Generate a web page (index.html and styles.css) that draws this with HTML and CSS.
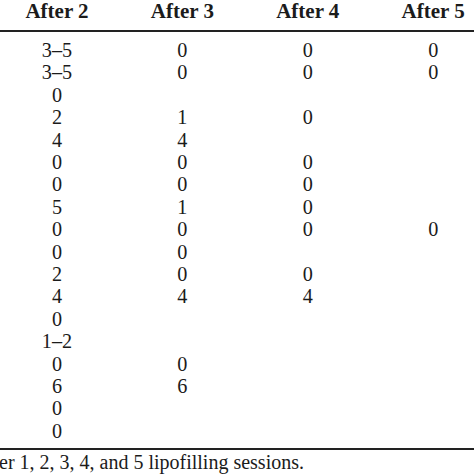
FILE: index.html
```html
<!DOCTYPE html>
<html>
<head>
<meta charset="utf-8">
<link rel="stylesheet" href="styles.css">
</head>
<body>
<div class="page">
  <div class="grid head">
    <div>After 2</div><div>After 3</div><div>After 4</div><div>After 5</div>
  </div>
  <div class="grid body">
    <div>3–5</div><div>0</div><div>0</div><div>0</div>
    <div>3–5</div><div>0</div><div>0</div><div>0</div>
    <div>0</div><div></div><div></div><div></div>
    <div>2</div><div>1</div><div>0</div><div></div>
    <div>4</div><div>4</div><div></div><div></div>
    <div>0</div><div>0</div><div>0</div><div></div>
    <div>0</div><div>0</div><div>0</div><div></div>
    <div>5</div><div>1</div><div>0</div><div></div>
    <div>0</div><div>0</div><div>0</div><div>0</div>
    <div>0</div><div>0</div><div></div><div></div>
    <div>2</div><div>0</div><div>0</div><div></div>
    <div>4</div><div>4</div><div>4</div><div></div>
    <div>0</div><div></div><div></div><div></div>
    <div>1–2</div><div></div><div></div><div></div>
    <div>0</div><div>0</div><div></div><div></div>
    <div>6</div><div>6</div><div></div><div></div>
    <div>0</div><div></div><div></div><div></div>
    <div>0</div><div></div><div></div><div></div>
  </div>
  <div class="note">er 1, 2, 3, 4, and 5 lipofilling sessions.</div>
</div>
</body>
</html>
```
FILE: styles.css
```css
html, body {
  margin: 0;
  padding: 0;
  background: #ffffff;
  overflow: hidden;
}
.page {
  width: 474px;
  height: 474px;
  overflow: hidden;
  font-family: "Liberation Serif", "Times New Roman", serif;
  color: #1b1b1b;
}
.grid {
  display: grid;
  grid-template-columns: repeat(4, 125.4px);
  margin-left: -5.7px;
  width: 501.6px;
  text-align: center;
}
.head {
  font-weight: bold;
  font-size: 21px;
  line-height: 23.3px;
  padding-bottom: 6.7px;
  border-bottom: 2px solid #222;
}
.body {
  font-size: 20.2px;
  line-height: 22.4px;
  padding-top: 7px;
  padding-bottom: 5.8px;
  border-bottom: 2px solid #222;
}
.note {
  font-size: 20px;
  line-height: 24px;
  margin-left: -1px;
  white-space: nowrap;
}
```
